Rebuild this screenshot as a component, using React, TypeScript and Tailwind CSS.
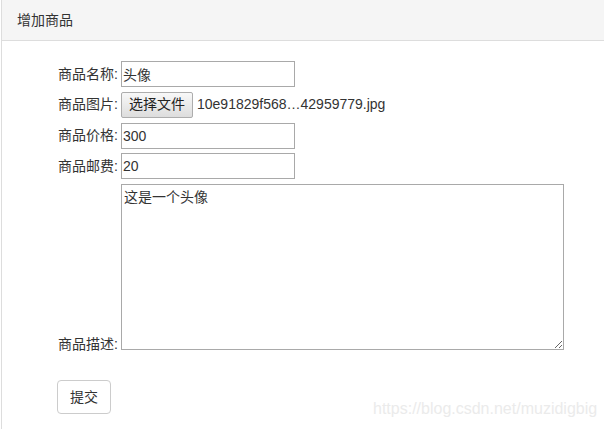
const font = { fontFamily: '"Liberation Sans", "Noto Sans CJK SC", sans-serif' };

const fields = [
    { label: "商品名称:", value: "头像" },
    { label: "商品价格:", value: "300" },
    { label: "商品邮费:", value: "20" },
];

function Label({ text, className = "" }: { text: string; className?: string }) {
    return <div className={`w-[61px] mr-[3px] text-right text-[14px] text-[#333] whitespace-nowrap ${className}`}>{text}</div>;
}

function TextField({ label, value }: { label: string; value: string }) {
    return (
        <div className="flex items-center h-[26px]">
            <Label text={label} />
            <input
                type="text"
                defaultValue={value}
                className="w-[174px] h-[26px] border border-[#a9a9a9] px-px text-[14px] text-[#333] outline-none"
                style={font}
            />
        </div>
    );
}

export default function App() {
    return (
        <div className="relative w-full h-[429px] overflow-hidden bg-white" style={font}>
            <div className="ml-px h-full border-l border-[#ddd]">
                {/* Panel Heading */}
                <div className="h-[41px] bg-[#f5f5f5] border-b border-[#ddd] px-[15px] flex items-center text-[14px] text-[#333]">
                    增加商品
                </div>

                {/* Form */}
                <div className="pl-[55px] pt-[20px] flex flex-col gap-[4.75px]">
                    <TextField label={fields[0].label} value={fields[0].value} />

                    <div className="flex items-center h-[26px]">
                        <Label text="商品图片:" />
                        <div className="h-[26px] w-[72px] flex items-center justify-center rounded-[2px] border border-[#adadad] bg-gradient-to-b from-[#f8f8f8] to-[#dddddd] text-[14px] text-[#222]">
                            选择文件
                        </div>
                        <span className="ml-[4px] text-[14px] text-[#333] whitespace-nowrap">10e91829f568…42959779.jpg</span>
                    </div>

                    <TextField label={fields[1].label} value={fields[1].value} />
                    <TextField label={fields[2].label} value={fields[2].value} />

                    <div className="flex items-end">
                        <Label text="商品描述:" className="leading-[14px] -mb-px" />
                        <textarea
                            defaultValue="这是一个头像"
                            className="w-[443px] h-[166px] border border-[#a9a9a9] p-[2px] text-[14px] text-[#333] outline-none"
                            style={font}
                        />
                    </div>
                </div>

                <div className="pl-[55px] pt-[30px]">
                    <button className="h-[34px] w-[54px] rounded-[4px] border border-[#ccc] bg-white text-[14px] text-[#333]">
                        提交
                    </button>
                </div>
            </div>

            {/* Watermark */}
            <div className="absolute left-[373px] top-[401px] text-[16px] leading-none text-[#ebebeb] whitespace-nowrap">
                https://blog.csdn.net/muzidigbig
            </div>
        </div>
    );
}
